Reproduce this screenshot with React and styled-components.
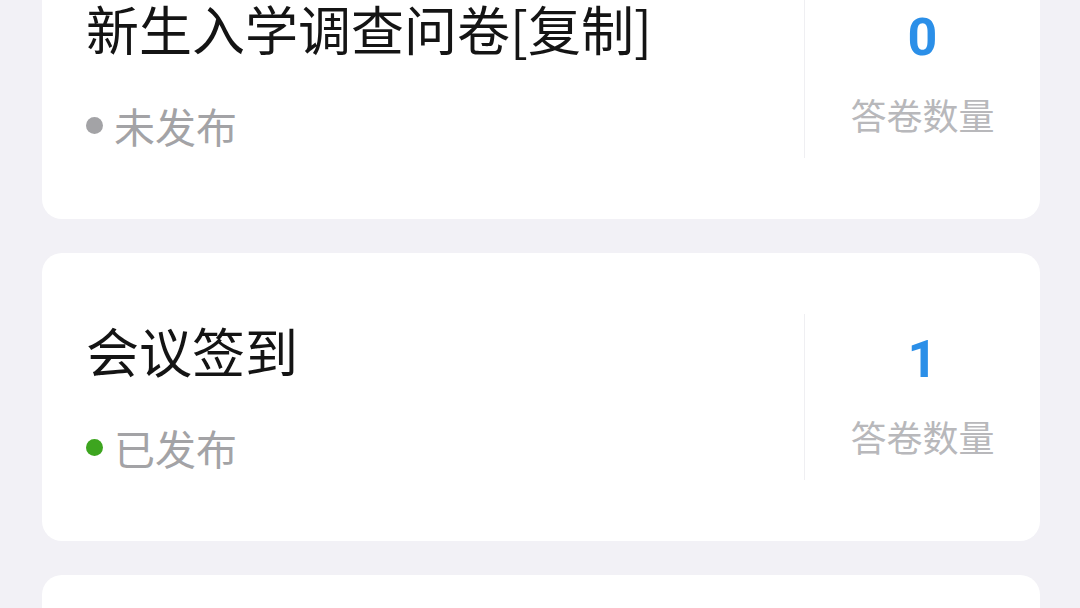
import React from "react";
import styled, { createGlobalStyle } from "styled-components";

const GlobalStyle = createGlobalStyle`
  html, body {
    margin: 0;
    padding: 0;
    background: #f2f1f6;
    overflow: hidden;
  }
  body {
    font-family: "Noto Sans CJK SC", "Noto Sans", sans-serif;
  }
`;

const Page = styled.div`
  width: 1080px;
  height: 608px;
  overflow: hidden;
  background: #f2f1f6;
  padding: 0 40px 0 42px;
  box-sizing: border-box;
`;

const List = styled.div`
  display: flex;
  flex-direction: column;
  gap: 34px;
  margin-top: -69px;
`;

const Card = styled.div`
  background: #ffffff;
  border-radius: 20px;
  height: 288px;
  display: grid;
  grid-template-columns: 1fr 236px;
`;

const Info = styled.div`
  display: flex;
  flex-direction: column;
  padding: 65px 0 0 44px;
  min-width: 0;
`;

const Title = styled.div`
  font-size: 53px;
  line-height: 64px;
  color: #141414;
  white-space: nowrap;
`;

const Status = styled.div`
  margin-top: 41px;
  display: flex;
  align-items: center;
  gap: 11px;
  font-size: 41px;
  line-height: 48px;
  color: #a3a3a6;
`;

const Dot = styled.span`
  width: 17px;
  height: 17px;
  border-radius: 50%;
  background: ${(p) => (p.$published ? "#3da51f" : "#a3a3a6")};
  flex: none;
`;

const Stat = styled.div`
  align-self: center;
  height: 166px;
  border-left: 1px solid #efeff2;
  display: flex;
  flex-direction: column;
  align-items: center;
  padding-top: 18px;
  box-sizing: border-box;
`;

const Count = styled.div`
  font-family: "Roboto", "Noto Sans", sans-serif;
  font-weight: 700;
  font-size: 52px;
  line-height: 56px;
  color: #2b8fe8;
`;

const CountLabel = styled.div`
  margin-top: 26px;
  font-size: 36px;
  line-height: 44px;
  color: #b8b8bb;
`;

const surveys = [
  { title: "新生入学调查问卷[复制]", published: false, count: 0 },
  { title: "会议签到", published: true, count: 1 },
  { title: "", published: false, count: null },
];

export default function App() {
  return (
    <Page>
      <GlobalStyle />
      <List>
        {surveys.map((s, i) => (
          <Card key={i}>
            {s.title && (
              <>
                <Info>
                  <Title>{s.title}</Title>
                  <Status>
                    <Dot $published={s.published} />
                    {s.published ? "已发布" : "未发布"}
                  </Status>
                </Info>
                <Stat>
                  <Count>{s.count}</Count>
                  <CountLabel>答卷数量</CountLabel>
                </Stat>
              </>
            )}
          </Card>
        ))}
      </List>
    </Page>
  );
}
